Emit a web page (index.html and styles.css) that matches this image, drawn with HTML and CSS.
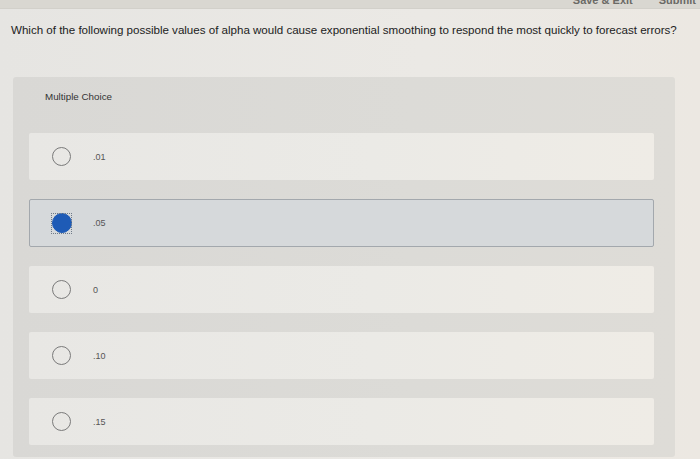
FILE: index.html
```html
<!DOCTYPE html>
<html>
<head>
<meta charset="utf-8">
<link rel="stylesheet" href="styles.css">
</head>
<body>
<div class="topbar">
  <span class="tb-btn">Save &amp; Exit</span>
  <span class="tb-btn">Submit</span>
</div>
<div class="question">Which of the following possible values of alpha would cause exponential smoothing to respond the most quickly to forecast errors?</div>
<div class="panel">
  <div class="panel-head">Multiple Choice</div>
  <div class="options">
    <div class="opt"><span class="radio"></span><span class="label">.01</span></div>
    <div class="opt selected"><span class="focus"><span class="radio on"></span></span><span class="label">.05</span></div>
    <div class="opt"><span class="radio"></span><span class="label">0</span></div>
    <div class="opt"><span class="radio"></span><span class="label">.10</span></div>
    <div class="opt"><span class="radio"></span><span class="label">.15</span></div>
  </div>
</div>
</body>
</html>
```
FILE: styles.css
```css
html, body {
  margin: 0;
  padding: 0;
  height: 100%;
  overflow: hidden;
}
body {
  background: linear-gradient(90deg, #e6e5e2 0%, #ebe9e5 60%, #ece8e2 100%);
  font-family: "Liberation Sans", Arial, sans-serif;
  color: #2a2a2a;
}
.topbar {
  height: 8px;
  background: #d9d7d1;
  display: flex;
  justify-content: flex-end;
  gap: 26px;
  padding-right: 4px;
  overflow: hidden;
  border-bottom: 1px solid #d2d0ca;
}
.tb-btn {
  font-size: 11px;
  font-weight: bold;
  color: #6b6a66;
  line-height: 4px;
  margin-top: -2px;
}
.question {
  font-size: 11.6px;
  padding: 14px 0 0 11px;
  height: 55px;
  box-sizing: border-box;
  color: #222;
  letter-spacing: -0.02px;
}
.panel {
  margin: 13px 25px 0 13px;
  background: linear-gradient(90deg, #d9d8d5 0%, #dcdbd7 60%, #dedcd7 100%);
  border-radius: 3px;
  padding: 0 21px 12px 16px;
}
.panel-head {
  height: 56px;
  box-sizing: border-box;
  padding: 14px 0 0 16px;
  font-size: 9.8px;
  color: #333;
}
.options {
  display: flex;
  flex-direction: column;
  gap: 19px;
}
.opt {
  height: 47px;
  background: linear-gradient(90deg, #e8e7e4 0%, #ebeae6 55%, #efece6 100%);
  border-radius: 2px;
  display: flex;
  align-items: center;
  padding-left: 23px;
  box-sizing: border-box;
}
.opt.selected {
  background: #d6d9db;
  border: 1px solid #a3a8ad;
  height: 48px;
  padding-left: 22px;
}
.radio {
  width: 19px;
  height: 19px;
  border: 1.3px solid #7a7a7a;
  border-radius: 50%;
  box-sizing: border-box;
  flex: none;
}
.focus {
  width: 19px;
  height: 19px;
  outline: 1px dotted #6f7a88;
  display: flex;
  align-items: center;
  justify-content: center;
  flex: none;
}
.radio.on {
  background: #1e5bb6;
  border-color: #1e5bb6;
  width: 20px;
  height: 20px;
}
.label {
  margin-left: 22px;
  font-size: 9px;
  color: #555;
}
```
